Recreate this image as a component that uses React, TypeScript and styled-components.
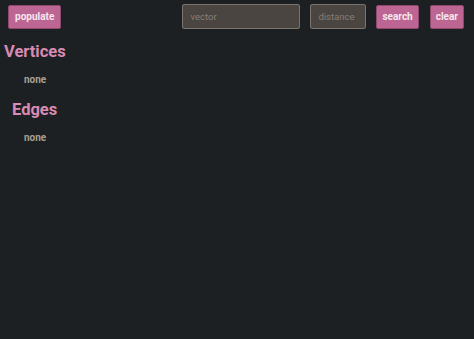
import React from 'react'
import styled, { createGlobalStyle } from 'styled-components'

const GlobalStyle = createGlobalStyle`
  html, body {
    margin: 0;
    padding: 0;
    background: #1d2022;
  }
  body {
    font-family: Roboto, 'Liberation Sans', sans-serif;
  }
`

const Page = styled.div`
  min-height: 339px;
  background: #1d2022;
`

const Toolbar = styled.div`
  display: flex;
  align-items: center;
  padding: 4px 10px 0 8px;
  height: 25px;
`

const Spacer = styled.div`
  flex: 1;
`

const Button = styled.button<{ $gap?: number; $pad?: number }>`
  height: 24px;
  padding: 0 ${(p) => p.$pad ?? 5}px;
  margin-left: ${(p) => p.$gap ?? 0}px;
  background: #be6693;
  color: #f6e6ee;
  border: 1px solid #8e4a6c;
  border-radius: 2px;
  font-family: Roboto, 'Liberation Sans', sans-serif;
  font-weight: bold;
  font-size: 10px;
`

const Input = styled.input<{ $width: number; $gap?: number }>`
  box-sizing: border-box;
  width: ${(p) => p.$width}px;
  height: 25px;
  margin-left: ${(p) => p.$gap ?? 0}px;
  padding: 0 7px;
  background: #4b4541;
  border: 1px solid #7b746d;
  border-radius: 2px;
  color: #ddd;
  font-family: Roboto, 'Liberation Sans', sans-serif;
  font-size: 9.5px;
  outline: none;
  &::placeholder {
    color: #867d76;
  }
`

const Section = styled.section<{ $indent: number }>`
  padding-left: ${(p) => p.$indent}px;
`

const Heading = styled.h2`
  margin: 0;
  padding-top: 13px;
  font-size: 16.5px;
  line-height: 20px;
  font-weight: bold;
  color: #d98bb3;
`

const Empty = styled.div<{ $indent: number }>`
  padding: 11px 0 0 ${(p) => p.$indent}px;
  font-size: 10px;
  line-height: 14px;
  font-weight: bold;
  color: #a8a096;
`

export default function App() {
  return (
    <Page>
      <GlobalStyle />
      <Toolbar>
        <Button $pad={6}>populate</Button>
        <Spacer />
        <Input $width={118} placeholder="vector" />
        <Input $width={56} $gap={10} placeholder="distance" />
        <Button $gap={10}>search</Button>
        <Button $gap={11}>clear</Button>
      </Toolbar>
      <Section $indent={4}>
        <Heading>Vertices</Heading>
        <Empty $indent={20}>none</Empty>
      </Section>
      <Section $indent={12}>
        <Heading>Edges</Heading>
        <Empty $indent={12}>none</Empty>
      </Section>
    </Page>
  )
}
